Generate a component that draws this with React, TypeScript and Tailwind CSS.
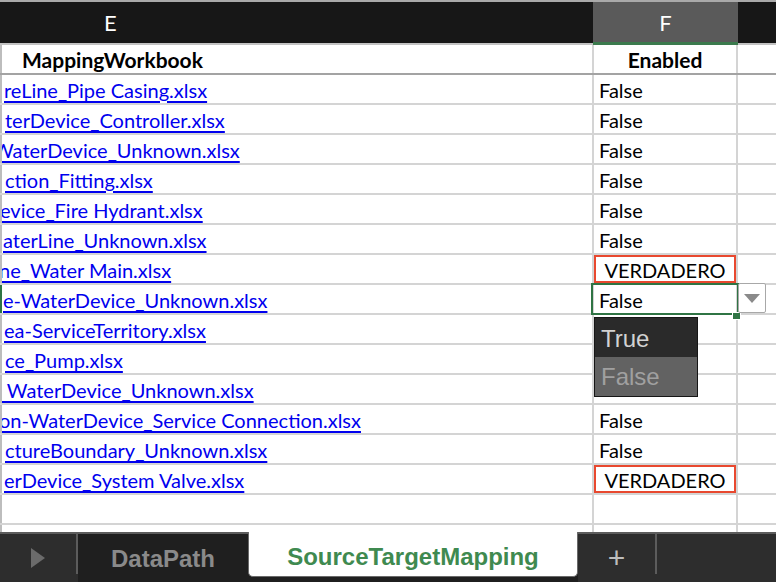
import React from "react";

type Row = { link: string; off: string; f: "False" | "VERDADERO" | "" | "SEL" | "HIDE" };

const rows: Row[] = [
  { link: "reLine_Pipe Casing.xlsx", off: "ml-[2px]", f: "False" },
  { link: "terDevice_Controller.xlsx", off: "ml-[3px]", f: "False" },
  { link: "WaterDevice_Unknown.xlsx", off: "-ml-[9px]", f: "False" },
  { link: "ction_Fitting.xlsx", off: "ml-[3px]", f: "False" },
  { link: "evice_Fire Hydrant.xlsx", off: "-ml-[2px]", f: "False" },
  { link: "aterLine_Unknown.xlsx", off: "ml-[1px]", f: "False" },
  { link: "ne_Water Main.xlsx", off: "-ml-[3px]", f: "VERDADERO" },
  { link: "e-WaterDevice_Unknown.xlsx", off: "ml-[1px]", f: "SEL" },
  { link: "ea-ServiceTerritory.xlsx", off: "ml-[2px]", f: "HIDE" },
  { link: "ce_Pump.xlsx", off: "ml-[3px]", f: "HIDE" },
  { link: "\u00a0WaterDevice_Unknown.xlsx", off: "ml-[0px]", f: "HIDE" },
  { link: "on-WaterDevice_Service Connection.xlsx", off: "-ml-[3px]", f: "False" },
  { link: "ctureBoundary_Unknown.xlsx", off: "ml-[3px]", f: "False" },
  { link: "erDevice_System Valve.xlsx", off: "ml-[2px]", f: "VERDADERO" },
  { link: "", off: "", f: "" },
];

function FCell({ f }: { f: Row["f"] }) {
  if (f === "VERDADERO") {
    return (
      <div className="h-full w-full border-2 border-[#e8482f] flex items-center justify-center pt-[2px]">
        VERDADERO
      </div>
    );
  }
  if (f === "SEL") {
    return (
      <div className="relative h-full w-full flex items-center pl-[5px] pt-[2px]">
        False
        <div className="absolute -left-[3px] -top-[2px] -right-[3px] -bottom-[2px] border-[2.5px] border-[#2f7444]" />
        <div className="absolute left-[138px] top-[27px] w-[9px] h-[8px] bg-[#2f7444] border border-white" />
        <div className="absolute left-[144px] -top-[2px] w-[28px] h-[30px] bg-white border border-[#a8a8a8] rounded-[2px] flex items-center justify-center">
          <svg width="16" height="9" viewBox="0 0 16 9">
            <path d="M0 0 L16 0 L8 9 Z" fill="#8a8a8a" />
          </svg>
        </div>
        <div className="absolute left-0 top-[32px] w-[104px] h-[80px] bg-[#2a2a2a] border border-[#161616] flex flex-col font-['Liberation_Sans',Arial,sans-serif] text-[24px] leading-none z-10">
          <div className="h-[39px] flex items-center pl-[6px] pt-[2px] text-[#d2d2d2]">True</div>
          <div className="h-[39px] flex items-center pl-[6px] pt-[1px] bg-[#626262] text-[#a0a0a0]">False</div>
        </div>
      </div>
    );
  }
  if (f === "False") {
    return <div className="h-full w-full flex items-center pl-[5px] pt-[2px]">False</div>;
  }
  return null;
}

export default function App() {
  return (
    <div className="w-[776px] h-[582px] overflow-hidden bg-white flex flex-col font-['Lato','Liberation_Sans',sans-serif] text-[20px] text-black">
      {/* column headers */}
      <div className="flex h-[45px] border-t-2 border-[#a9a9a9] text-white text-[22px] shrink-0">
        <div className="w-[593px] bg-[#171717] border-b-2 border-[#c2c2c2] flex items-center">
          <span className="ml-[104px]">E</span>
        </div>
        <div className="w-[145px] bg-[#5a5a5a] border-b-[3px] border-[#3b7a4d] flex items-center justify-center">
          F
        </div>
        <div className="flex-1 bg-[#171717] border-b-2 border-[#c2c2c2]" />
      </div>

      {/* header row */}
      <div className="flex h-[30px] border-b-2 border-[#a3a3a3] shrink-0 font-bold text-[21px]">
        <div className="w-[594px] border-l-2 border-r-2 border-l-[#bdbdbd] border-r-[#d4d4d4] flex items-center pl-[20px] pt-[2px]">
          MappingWorkbook
        </div>
        <div className="w-[144px] border-r-2 border-[#d4d4d4] flex items-center justify-center pt-[2px]">
          Enabled
        </div>
        <div className="flex-1" />
      </div>

      {/* data rows */}
      {rows.map((r, i) => (
        <div key={i} className="flex h-[30px] border-b-2 border-[#d4d4d4] shrink-0">
          <div
            className={
              "w-[594px] border-l-2 border-r-2 border-r-[#d4d4d4] overflow-hidden flex items-center pt-[2px] " +
              (r.f === "SEL" ? "border-l-[#2f7444]" : "border-l-[#bdbdbd]")
            }
          >
            {r.link && (
              <span className={"whitespace-nowrap text-[#0000ee] underline underline-offset-[3px] decoration-[1.5px] " + r.off}>
                {r.link}
              </span>
            )}
          </div>
          <div className="w-[144px] border-r-2 border-[#d4d4d4]">
            <FCell f={r.f} />
          </div>
          <div className="flex-1" />
        </div>
      ))}

      {/* partial row */}
      <div className="flex flex-1">
        <div className="w-[594px] border-l-2 border-r-2 border-l-[#bdbdbd] border-r-[#d4d4d4]" />
        <div className="w-[144px] border-r-2 border-[#d4d4d4]" />
        <div className="flex-1" />
      </div>

      {/* sheet tabs */}
      <div className="flex h-[50px] shrink-0 bg-[#2d2d2d] font-['Liberation_Sans',Arial,sans-serif] font-bold text-[24px]">
        <div className="w-[76px] border-t-2 border-[#5c5c5c] flex items-center justify-center">
          <svg width="14" height="20" viewBox="0 0 14 20">
            <path d="M0 0 L14 10 L0 20 Z" fill="#6b6b6b" />
          </svg>
        </div>
        <div className="w-[2px] border-t-2 border-[#5c5c5c] flex flex-col">
          <div className="h-[40px] bg-[#5c5c5c]" />
        </div>
        <div className="w-[170px] bg-[#1f1f1f] border-t-2 border-[#5c5c5c] flex items-center justify-center text-[#8a8a8a] pt-[1px]">
          DataPath
        </div>
        <div className="w-[330px] bg-[#1f1f1f] flex flex-col">
          <div className="h-[45px] bg-white border-l border-r border-b border-[#6a6a6a] rounded-b-[5px] flex items-center justify-center text-[#3f8a50] pt-[5px]">
            SourceTargetMapping
          </div>
        </div>
        <div className="w-[77px] border-t-2 border-[#5c5c5c] flex items-center justify-center text-[#bdbdbd] text-[30px] font-normal pb-[2px]">
          +
        </div>
        <div className="w-[2px] border-t-2 border-[#5c5c5c] flex flex-col">
          <div className="h-[40px] bg-[#5c5c5c]" />
        </div>
        <div className="flex-1 border-t-2 border-[#5c5c5c]" />
      </div>
    </div>
  );
}
